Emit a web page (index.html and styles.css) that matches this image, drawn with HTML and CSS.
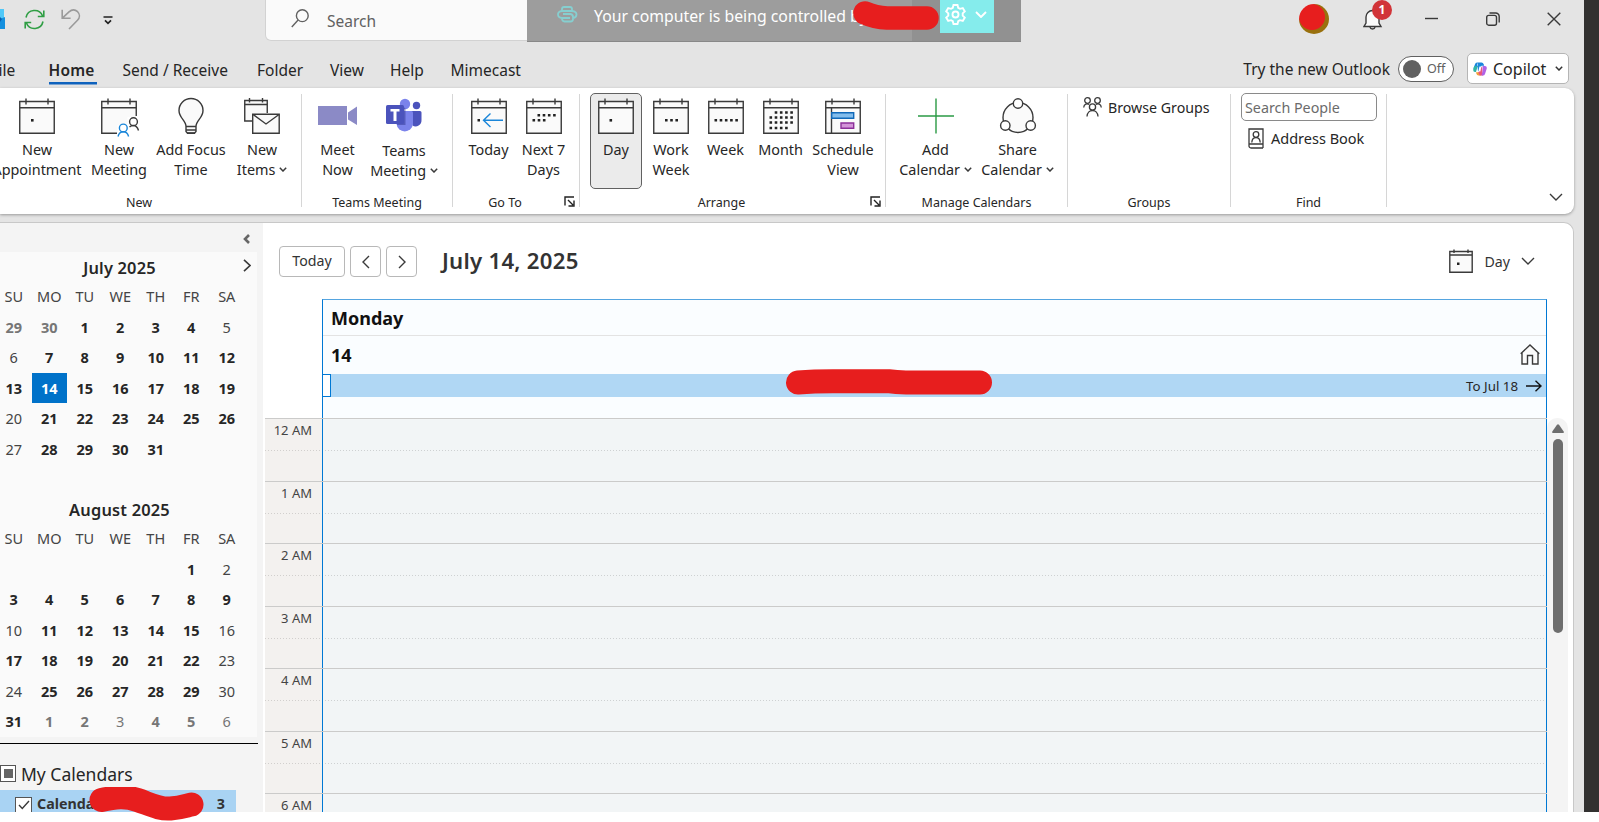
FILE: index.html
```html
<!DOCTYPE html>
<html lang="en">
   <head>
      <meta charset="utf-8">
      <title>Calendar - Outlook</title>
      <link rel="stylesheet" href="styles.css">
   </head>
   <body>
      <svg class="defs" width="0" height="0">
         <symbol id="cal" viewBox="0 0 36 36">
            <path class="paper" d="M.75 3.5h34.5v31.7H.75z"/>
            <path d="M.75 9.7h34.5M7 .5v6M29 .5v6"/>
         </symbol>
         <symbol id="chev" viewBox="0 0 8 5">
            <path d="M.8.8L4 4 7.2.8"/>
         </symbol>
         <symbol id="launch" viewBox="0 0 11 11">
            <path d="M1 9.5V1h9M4 4l5 5M10 4.5V10H4.5"/>
         </symbol>
      </svg>

      <div class="app">
         <div class="window">
            <header class="titlebar">
               <div class="quick">
                  <svg class="logo" width="6" height="21" viewBox="0 0 6 21"><path fill="#50c8f8" d="M0 0h4v10H0z"/><path fill="#1490df" d="M0 10l5-2v12H0z"/><path fill="#0a5fb0" d="M0 8l2 2-2 3z"/></svg>
                  <svg class="sync" width="21" height="21" viewBox="0 0 21 21"><path d="M2 8.5A8.7 8.7 0 0 1 18.6 7M19.8 1.5v6h-6M19 12.5A8.7 8.7 0 0 1 2.4 14M1.2 19.5v-6h6"/></svg>
                  <svg class="undo" width="20" height="21" viewBox="0 0 20 21"><path d="M1.2.8v8.4h8.4M1.6 8.8L8 2.9c2.9-2.6 6.300-2.300 8.600-.2 2.500 2.500 2.300 6-.1 8.500L8 20"/></svg>
                  <svg class="qat" width="10" height="9" viewBox="0 0 10 9"><path d="M.5 1h9M2 4.300l3 3 3-3"/></svg>
               </div>
               <div class="search">
                  <svg width="18" height="19" viewBox="0 0 18 19"><circle cx="11.300" cy="6.700" r="5.900"/><path d="M7.100 11L.8 18"/></svg>
                  <span>Search</span>
               </div>
               <div class="window-buttons">
                  <div class="avatar"></div>
                  <div class="bell">
                     <svg width="20" height="22" viewBox="0 0 20 22"><path class="paper" d="M1 17.500h17l-2-3.500V8a6.500 6.500 0 0 0-13 0v6z"/><path d="M7 18c.4 2.600 4.600 2.600 5 0"/></svg>
                     <span class="badge">1</span>
                  </div>
                  <svg class="min" width="13" height="14" viewBox="0 0 13 14"><path d="M0 6.500h13"/></svg>
                  <svg class="restore" width="14" height="14" viewBox="0 0 14 14"><rect x=".7" y="3.400" width="9.800" height="9.800" rx="2"/><path d="M3.500 1h6.200a3.500 3.500 0 0 1 3.500 3.500v6"/></svg>
                  <svg class="close" width="14" height="14" viewBox="0 0 14 14"><path d="M.7.700l12.600 12.600M13.300.700L.7 13.300"/></svg>
               </div>
            </header>

            <nav class="tabs">
               <span class="tab file">File</span>
               <span class="tab home">Home</span>
               <span class="tab send">Send / Receive</span>
               <span class="tab folder">Folder</span>
               <span class="tab view">View</span>
               <span class="tab help">Help</span>
               <span class="tab mime">Mimecast</span>
               <div class="tabs-right">
                  <span class="try">Try the new Outlook</span>
                  <span class="toggle"><i></i>Off</span>
                  <span class="copilot">
                     <svg width="14" height="14" viewBox="0 0 14 14"><path fill="#1b86dc" d="M4 .5h4.500q1.700 0 2.200 1.700l.5 1.600H8.500L6.600 9H5z M4 .5Q2.600.500 2.100 2L.4 6.500 3 8l2-5z"/><path fill="#31b5a5" d="M1.200 4.200L4.600 4 3 10H2Q-.2 10 .3 7z"/><path fill="#f2a03a" d="M3 10.200h3.500L8 13.500H5.500q-1.700 0-2.100-1.700z"/><path fill="#e8557f" d="M5.500 10.200L7.400 5H9l1 8.500H6.500z"/><path fill="#b062e6" d="M9.500 4H12q2.200 0 1.700 2.800L12 12q-.6 1.500-2 1.500H8.500L9.600 9.500z"/><path fill="#fff" d="M6.500 4.500h2L7.300 9.500h-2z"/></svg>
                     <span>Copilot</span>
                     <svg class="chev dark" width="8" height="5"><use href="#chev"/></svg>
                  </span>
               </div>
            </nav>

            <section class="ribbon">
               <div class="group g-new">
                  <div class="buttons">
                     <div class="btn b-appt">
                        <svg width="36" height="36"><use href="#cal"/><path class="dots" d="M12 21h2.600v2.600H12z"/></svg>
                        <span>New<br>Appointment</span>
                     </div>
                     <div class="btn b-meet">
                        <svg width="36" height="36" viewBox="0 0 36 36"><path class="paper" d="M16 35.200H.75V3.500h34.500V18"/><path d="M.75 9.700h34.500M7 .5v6M29 .5v6"/><path class="knock" d="M16.500 39V27h10v-8h13v20z"/><circle cx="32.500" cy="23.700" r="3.900"/><path d="M28.500 29q1.500-1.500 4-1.500 3.500 0 5 5"/><g class="blue"><circle cx="22.300" cy="30" r="3.900"/><path d="M17 38.500q1.300-4.700 5.300-4.700t5.300 4.700"/></g></svg>
                        <span>New<br>Meeting</span>
                     </div>
                     <div class="btn b-focus">
                        <svg width="26" height="36" viewBox="0 0 26 36"><path class="paper" d="M8 28.500c0-6-7-8.500-7-16a12 12 0 0 1 24 0c0 7.500-7 10-7 16v5l-1.500 1.700h-7L8 33.500z"/><path d="M8 28.500h10M8 32h10M9 35h8"/></svg>
                        <span>Add Focus<br>Time</span>
                     </div>
                     <div class="btn b-items">
                        <svg width="36" height="36" viewBox="0 0 36 36"><path class="paper" d="M8 23H.75V2.500h22.500V15"/><path d="M.75 6.500h22.500M5.500 0v4.500M18.500 0v4.500"/><path class="paper" d="M8.700 16.200h26.500v19H8.700z"/><path d="M9 16.500l13 9.500 13-9.500"/></svg>
                        <span>New<br>Items <svg class="chev" width="8" height="5"><use href="#chev"/></svg></span>
                     </div>
                  </div>
                  <div class="name">New</div>
               </div>
               <div class="group g-teams">
                  <div class="buttons">
                     <div class="btn b-now">
                        <svg width="39" height="36" viewBox="0 0 39 36"><path class="fill-cam" d="M0 8h29v19H0zM30 14.500L39 8.500v18.500L30 21.500z"/></svg>
                        <span>Meet<br>Now</span>
                     </div>
                     <div class="btn b-teams">
                        <svg width="36" height="36" viewBox="0 0 36 36"><circle class="t1" cx="19" cy="6" r="5.200"/><circle class="t2" cx="30.500" cy="7.500" r="3.700"/><path class="t2" d="M25 13h9q1.500 0 1.500 1.500V22a6 6 0 0 1-9 5.500z"/><path class="t1" d="M11 13h14.500q1.500 0 1.500 1.500V26a8.300 8.300 0 0 1-16.500 0z"/><path class="shade" d="M11 9.500h7q1.500 0 1.500 1.500v16h-8.500z"/><rect class="t2" x="0" y="7" width="18" height="19" rx="1.600"/><path class="tee" d="M4.500 11h9v2.500h-3v9.500h-3v-9.500h-3z"/></svg>
                        <span>Teams<br>Meeting <svg class="chev" width="8" height="5"><use href="#chev"/></svg></span>
                     </div>
                  </div>
                  <div class="name">Teams Meeting</div>
               </div>
               <div class="group g-goto">
                  <div class="buttons">
                     <div class="btn b-today">
                        <svg width="36" height="36"><use href="#cal"/><path class="dots" d="M6.500 21h2.500v2.500H6.500z"/><path class="blue" d="M32 22.300H13M19.500 15.500L12.500 22.300l7 6.800"/></svg>
                        <span>Today</span>
                     </div>
                     <div class="btn b-next">
                        <svg width="36" height="36"><use href="#cal"/><path class="dotline" d="M11.500 17.300h18.500M6.500 22.300h13.500"/></svg>
                        <span>Next 7<br>Days</span>
                     </div>
                  </div>
                  <div class="name">Go To</div>
                  <svg class="launch" width="11" height="11"><use href="#launch"/></svg>
               </div>
               <div class="group g-arrange">
                  <div class="buttons">
                     <div class="btn b-day active">
                        <svg width="36" height="36"><use href="#cal"/><path class="dots" d="M11.500 21h2.600v2.600h-2.600z"/></svg>
                        <span>Day</span>
                     </div>
                     <div class="btn b-work">
                        <svg width="36" height="36"><use href="#cal"/><path class="dotline" d="M12 22.300h13.500"/></svg>
                        <span>Work<br>Week</span>
                     </div>
                     <div class="btn b-week">
                        <svg width="36" height="36"><use href="#cal"/><path class="dotline" d="M6.500 22.300h24"/></svg>
                        <span>Week</span>
                     </div>
                     <div class="btn b-month">
                        <svg width="36" height="36"><use href="#cal"/><path class="dotline" d="M11.700 14.500h18.500M6.500 19.500h24M6.500 24.500h24M6.500 30h18.500"/></svg>
                        <span>Month</span>
                     </div>
                     <div class="btn b-sched">
                        <svg width="36" height="36"><use href="#cal"/><path d="M6.500 10v25"/><path class="bar1" d="M6.700 14.700h22v5.500h-22z"/><path class="bar2" d="M16 25h12.700v5.200H16z"/></svg>
                        <span>Schedule<br>View</span>
                     </div>
                  </div>
                  <div class="name">Arrange</div>
                  <svg class="launch" width="11" height="11"><use href="#launch"/></svg>
               </div>
               <div class="group g-manage">
                  <div class="buttons">
                     <div class="btn b-add">
                        <svg width="36" height="36"><path class="green" d="M0 18h36M18 .500v35"/></svg>
                        <span>Add<br>Calendar <svg class="chev" width="8" height="5"><use href="#chev"/></svg></span>
                     </div>
                     <div class="btn b-share">
                        <svg width="36" height="36"><circle class="paper" cx="18" cy="19.500" r="15"/><circle class="node" cx="18" cy="5.500" r="4.700"/><circle class="node" cx="5.300" cy="27.500" r="4.700"/><circle class="node" cx="30.700" cy="27.500" r="4.700"/></svg>
                        <span>Share<br>Calendar <svg class="chev" width="8" height="5"><use href="#chev"/></svg></span>
                     </div>
                  </div>
                  <div class="name">Manage Calendars</div>
               </div>
               <div class="group g-groups">
                  <div class="line">
                     <svg width="19" height="20" viewBox="0 0 19 20"><circle cx="4.500" cy="3.500" r="2.800"/><circle cx="14.500" cy="3.500" r="2.800"/><circle cx="9.500" cy="10" r="3.100"/><path d="M.7 10.500C1 7 4 6 6 7.500M18.300 10.500C18 7 15 6 13 7.500M4 19.500c.5-8 10.500-8 11 0"/></svg>
                     <span>Browse Groups</span>
                  </div>
                  <div class="name">Groups</div>
               </div>
               <div class="group g-find">
                  <div class="people">Search People</div>
                  <div class="line book">
                     <svg width="16" height="21" viewBox="0 0 16 21"><path d="M15 20H3a2 2 0 0 1-2-2V1h14v19M1.500 16H15"/><circle cx="8" cy="6.500" r="2.800"/><path d="M3.800 14.500c.4-6.500 8-6.500 8.400 0"/></svg>
                     <span>Address Book</span>
                  </div>
                  <div class="name">Find</div>
               </div>
               <svg class="collapse" width="14" height="8" viewBox="0 0 14 8"><path d="M1 1l6 6 6-6"/></svg>
            </section>

            <main class="content">
               <aside class="side">
                  <div class="side-top"><svg width="7" height="10" viewBox="0 0 7 10"><path d="M6 1L2 5l4 4"/></svg></div>
                  <div class="months">
                     <div class="month">
                        <div class="month-title">July 2025 <svg class="next" width="8" height="13" viewBox="0 0 8 13"><path d="M1 .800l6 5.700-6 5.700"/></svg></div>
                        <div class="days head"><i>SU</i><i>MO</i><i>TU</i><i>WE</i><i>TH</i><i>FR</i><i>SA</i></div>
                        <div class="days">
                           <b class="dim">29</b><b class="dim">30</b><b>1</b><b>2</b><b>3</b><b>4</b><i>5</i>
                           <i>6</i><b>7</b><b>8</b><b>9</b><b>10</b><b>11</b><b>12</b>
                           <b>13</b><b class="sel">14</b><b>15</b><b>16</b><b>17</b><b>18</b><b>19</b>
                           <i>20</i><b>21</b><b>22</b><b>23</b><b>24</b><b>25</b><b>26</b>
                           <i>27</i><b>28</b><b>29</b><b>30</b><b>31</b>
                        </div>
                     </div>
                     <div class="month">
                        <div class="month-title">August 2025</div>
                        <div class="days head"><i>SU</i><i>MO</i><i>TU</i><i>WE</i><i>TH</i><i>FR</i><i>SA</i></div>
                        <div class="days">
                           <b class="first-fri">1</b><i>2</i>
                           <b>3</b><b>4</b><b>5</b><b>6</b><b>7</b><b>8</b><b>9</b>
                           <i>10</i><b>11</b><b>12</b><b>13</b><b>14</b><b>15</b><i>16</i>
                           <b>17</b><b>18</b><b>19</b><b>20</b><b>21</b><b>22</b><i>23</i>
                           <i>24</i><b>25</b><b>26</b><b>27</b><b>28</b><b>29</b><i>30</i>
                           <b>31</b><b class="dim">1</b><b class="dim">2</b><i class="dim">3</i><b class="dim">4</b><b class="dim">5</b><i class="dim">6</i>
                        </div>
                     </div>
                  </div>
                  <div class="my-calendars">
                     <span class="box mixed"></span>
                     <span>My Calendars</span>
                  </div>
                  <div class="calendar-row">
                     <span class="box"><svg width="12" height="10" viewBox="0 0 12 10"><path d="M1 5l3.300 3.500L11 1"/></svg></span>
                     <span class="cal-name">Calenda</span>
                     <span class="count">3</span>
                  </div>
               </aside>

               <section class="day-view">
                  <div class="toolbar">
                     <span class="tool today">Today</span>
                     <span class="tool prev"><svg width="8" height="14" viewBox="0 0 8 14"><path d="M7 1L1 7l6 6"/></svg></span>
                     <span class="tool nxt"><svg width="8" height="14" viewBox="0 0 8 14"><path d="M1 1l6 6-6 6"/></svg></span>
                     <h1>July 14, 2025</h1>
                     <div class="picker">
                        <svg width="24" height="24" viewBox="0 0 24 24"><path class="paper" d="M.8 2.500h22.400v20.700H.8z"/><path d="M1 6h22M5 .500v3.500M19 .500v3.500"/><path class="dots" d="M8 13.500h2.500v2.500H8z"/></svg>
                        <span>Day</span>
                        <svg width="14" height="8" viewBox="0 0 14 8"><path d="M1 1l6 6 6-6"/></svg>
                     </div>
                  </div>
                  <div class="day-head">
                     <div class="weekday">Monday</div>
                     <div class="date">14
                        <svg width="20" height="21" viewBox="0 0 20 21"><path class="paper" d="M.700 9.700L10 1l9.300 8.700M2 9v11h5.500v-8.500h5V20H18V9"/></svg>
                     </div>
                     <div class="event">
                        <span class="busy"></span>
                        <span>To Jul 18</span>
                        <svg width="16" height="12" viewBox="0 0 16 12"><path d="M0 6h15M9.500.700L15 6l-5.500 5.300"/></svg>
                     </div>
                  </div>
                  <div class="scroll">
                     <div class="hours">
                        <div class="hour"><span>12 AM</span><div></div></div>
                        <div class="hour"><span>1 AM</span><div></div></div>
                        <div class="hour"><span>2 AM</span><div></div></div>
                        <div class="hour"><span>3 AM</span><div></div></div>
                        <div class="hour"><span>4 AM</span><div></div></div>
                        <div class="hour"><span>5 AM</span><div></div></div>
                        <div class="hour"><span>6 AM</span><div></div></div>
                     </div>
                     <div class="scrollbar">
                        <svg width="12" height="9" viewBox="0 0 12 9"><path d="M5 .800q1-1.300 2 0l4.700 6.700q.5 1.500-1 1.500H1.300Q-.2 9 .3 7.500z"/></svg>
                        <div class="thumb"></div>
                     </div>
                  </div>
               </section>
            </main>
         </div>

         <!-- remote control bar floats over the title bar -->
         <div class="remote">
            <svg class="remote-icon" width="21" height="17" viewBox="0 0 21 17"><path d="M15 5V3q0-2-2-2H7Q5 1 5 3v2h10q4.500.5 4.500 3.500T16 12M5 5Q1 5.500 1 8.500T5 12h1M6 8h7.500q2.500.5 2.500 3v2q0 2.500-2.500 2.500h-6Q5 15.500 5 12h8"/></svg>
            <span>Your computer is being controlled by</span>
            <div class="remote-menu">
               <svg width="21" height="21" viewBox="0 0 21 21"><path d="M8.500 1h4l.7 2.800 1.800 1 2.800-.8 2 3.400-2.100 2v2.200l2.100 2-2 3.400-2.800-.8-1.800 1-.7 2.800h-4l-.7-2.800-1.800-1-2.800.8-2-3.400 2.100-2V9.400l-2.100-2 2-3.400 2.800.8 1.800-1z"/><circle cx="10.500" cy="10.500" r="3"/></svg>
               <svg width="12" height="7" viewBox="0 0 12 7"><path d="M1 1l5 5 5-5"/></svg>
            </div>
         </div>
      </div>

      <svg class="ink ink-name" width="88" height="29" viewBox="0 0 88 29"><path d="M13 12q10 4.500 22 5h40" stroke-width="23.500"/></svg>
      <svg class="ink ink-event" width="208" height="28" viewBox="0 0 208 28"><path d="M13 13.500q18-1.500 40-1.300h50q8 1.300 18 1.300h74" stroke-width="24"/></svg>
      <svg class="ink ink-cal" width="117" height="36" viewBox="0 0 117 36"><path d="M13.500 13c14-3 24-4 36 0s22 9.500 33 8.500 16-3 21-4" stroke-width="24"/></svg>
   </body>
</html>
```
FILE: styles.css
```css
body {
   margin: 0;
   width: 1599px;
   height: 822px;
   position: relative;
   overflow: hidden;
   background: #fff;
   color: #262626;
   font-family: "Noto Sans", "Open Sans", sans-serif;
}

svg {
   fill: none;
   stroke: #3a3a3a;
   stroke-width: 1.4;
   flex: none;
}

i {
   font-style: normal;
}

.defs {
   position: absolute;
}

.paper {
   fill: #fafafa;
}

.app {
   height: 812px;
   background: #323130;
   position: relative;
   overflow: hidden;
}

.window {
   width: 1584px;
   height: 812px;
   background: #e4e4e4;
   display: flex;
   flex-direction: column;
}

/* title bar */
.titlebar {
   height: 41px;
   display: flex;
   flex: none;
}

.quick {
   width: 265px;
   display: flex;
   align-items: flex-start;
   padding-top: 9px;
   flex: none;
}

.logo {
   stroke: none;
}

.sync {
   margin-left: 18px;
   stroke: #2f9e44;
   stroke-width: 1.6;
}

.undo {
   margin-left: 16px;
   stroke: #9a9a9a;
   stroke-width: 1.6;
}

.qat {
   margin: 7px 0 0 22px;
   stroke: #222;
   stroke-width: 1.7;
}

.search {
   width: 646px;
   height: 41px;
   box-sizing: border-box;
   border: 1px solid #d2d2d2;
   border-top: 0;
   border-radius: 0 0 6px 6px;
   background: #fafafa;
   display: flex;
   align-items: center;
   padding: 1px 0 0 25px;
   gap: 18px;
   font-size: 15.5px;
   color: #616161;
}

.search svg {
   margin-top: -4px;
   stroke: #616161;
}

.window-buttons {
   display: flex;
   margin-left: auto;
   padding: 12px 23px 0 0;
}

.avatar {
   width: 30px;
   height: 30px;
   margin: -8px -1px 0 0;
   border-radius: 50%;
   background: radial-gradient(circle at 13px 13px, #e71e1e 12.500px, #99700d 13.500px);
}

.bell {
   position: relative;
   margin: -3px 0 0 35px;
   width: 20px;
}

.badge {
   position: absolute;
   left: 9px;
   top: -9px;
   width: 20px;
   height: 20px;
   border-radius: 50%;
   background: #d13438;
   color: #fff;
   font-size: 12px;
   font-weight: bold;
   line-height: 20px;
   text-align: center;
}

.min {
   margin-left: 42px;
}

.restore {
   margin-left: 48px;
}

.close {
   margin-left: 47px;
}

/* tabs */
.tabs {
   height: 47px;
   flex: none;
   display: flex;
   align-items: center;
   font-size: 15.5px;
   white-space: nowrap;
}

.tab {
   line-height: 24px;
   margin-top: 11px;
   flex: none;
}

.file {
   width: 58px;
   margin-left: -9.500px;
}

.home {
   width: 48px;
   font-weight: 600;
   letter-spacing: .2px;
   box-shadow: 0 2.500px 0 #0f62bd;
}

.send {
   margin-left: 26px;
   width: 134.500px;
}

.folder {
   width: 73px;
}

.view {
   width: 60px;
}

.help {
   width: 60.500px;
}

.tabs-right {
   display: flex;
   align-items: center;
   margin: 8px 15px 0 auto;
}

.toggle {
   box-sizing: border-box;
   width: 56px;
   height: 26px;
   margin: 0 13px 0 8px;
   border: 1px solid #616161;
   border-radius: 13px;
   background: #fff;
   color: #616161;
   font-size: 12.5px;
   display: flex;
   align-items: center;
   gap: 6px;
   padding-left: 4px;
}

.toggle i {
   width: 18px;
   height: 18px;
   border-radius: 50%;
   background: #616161;
}

.copilot {
   box-sizing: border-box;
   width: 102px;
   height: 31px;
   border: 1px solid #b5b5b5;
   border-radius: 5px;
   background: #fff;
   display: flex;
   align-items: center;
   padding-left: 5px;
   gap: 6px;
   font-size: 16px;
}

.copilot svg {
   stroke: none;
}

.copilot .chev {
   stroke: #333;
   margin-left: 3px;
}

/* ribbon */
.ribbon {
   height: 126px;
   width: 1574px;
   flex: none;
   background: #fff;
   border-radius: 0 9px 9px 0;
   box-shadow: 0 1px 3px #9a9a9a;
   display: flex;
   position: relative;
   white-space: nowrap;
}

.group {
   box-sizing: border-box;
   margin: 6px 0 7px;
   height: 113px;
   border-right: 1px solid #d6d6d6;
   position: relative;
   display: flex;
   flex-direction: column;
}

.buttons {
   display: flex;
   height: 95px;
   margin-top: -1px;
}

.btn {
   display: flex;
   flex-direction: column;
   align-items: center;
   box-sizing: border-box;
   padding-top: 5px;
   font-size: 14.4px;
   line-height: 20.400px;
   text-align: center;
}

.btn > span {
   margin-top: 5.500px;
}

.btn > svg {
   height: 36px;
   overflow: visible;
}

.chev {
   stroke-width: 1.5;
   vertical-align: 3px;
}

.name {
   margin-top: auto;
   height: 20px;
   line-height: 20px;
   margin-bottom: -5.500px;
   font-size: 12.500px;
   text-align: center;
}

.launch {
   position: absolute;
   right: 4px;
   bottom: 0;
   stroke: #222;
}

.g-new { width: 302px; }
.g-teams { width: 151px; }
.g-goto { width: 127px; }
.g-arrange { width: 306px; }
.g-manage { width: 182px; }
.g-groups { width: 163px; }
.g-find { width: 156px; }

.g-new .name { padding-right: 23px; }
.g-goto .name { padding-right: 22px; }
.g-arrange .name { padding-right: 22px; }

.b-appt { width: 90px; margin-left: -8px; }
.b-meet { width: 74px; }
.b-focus { width: 70px; }
.b-items { width: 72px; }
.b-now { width: 71px; }
.b-teams { width: 62px; }
.b-today { width: 53px; margin-left: 9px; }
.b-next { width: 57px; }
.b-day { width: 52px; margin-left: 10px; }
.b-work { width: 54px; margin-left: 2px; }
.b-week { width: 55px; }
.b-month { width: 55px; }
.b-sched { width: 70px; }
.b-add { width: 83px; margin-left: 8px; }
.b-share { width: 81px; }

.b-teams > span {
   margin-top: 7px;
}

.active {
   height: 96px;
   padding-top: 4px;
   border: 1px solid #616161;
   border-radius: 5px;
   background: #ebebeb;
}

.dots {
   fill: #222;
   stroke: none;
}

.dotline {
   stroke: #222;
   stroke-width: 2.600;
   stroke-dasharray: 2.600 2.600;
}

.blue { stroke: #1a86d9; }
.green { stroke: #2b9a45; }
.knock { fill: #fff; stroke: none; }
.node { fill: #fff; }
.fill-cam { fill: #8b8ac6; stroke: none; }
.t1 { fill: #7b83eb; stroke: none; }
.t2 { fill: #4b53bc; stroke: none; }
.shade { fill: #2f3590; stroke: none; opacity: .5; }
.tee { fill: #fff; stroke: none; }
.bar1 { fill: #83bdec; stroke: #1068b8; }
.bar2 { fill: #d394d8; stroke: #8c2f9a; }

.line {
   display: flex;
   align-items: center;
   gap: 6px;
   height: 22px;
   font-size: 14.2px;
   margin: 2px 0 0 15px;
}

.line svg {
   stroke-width: 1.3;
}

.people {
   box-sizing: border-box;
   width: 136px;
   height: 28px;
   margin: -1px 0 0 10px;
   border: 1px solid #8a8a8a;
   border-radius: 5px;
   padding-left: 3px;
   line-height: 27px;
   font-size: 14.3px;
   color: #6b6b6b;
}

.book {
   margin: 6px 0 0 17px;
   gap: 7px;
   font-size: 14.5px;
}

.collapse {
   position: absolute;
   right: 11px;
   bottom: 13px;
}

/* content */
.content {
   display: flex;
   width: 1574px;
   box-sizing: border-box;
   margin-top: 8px;
   flex: 1;
   min-height: 0;
   border: 1px solid #c8c8c8;
   border-width: 1px 1px 0 0;
   border-radius: 0 10px 0 0;
   background: #fff;
}

.side {
   width: 263px;
   flex: none;
   background: #f4f4f4;
}

.side-top {
   height: 29px;
   display: flex;
   justify-content: flex-end;
   align-items: flex-start;
   padding: 11px 13px 0 0;
   box-sizing: border-box;
}

.side-top svg {
   stroke: #666;
   stroke-width: 2.600;
}

.months {
   width: 257px;
   height: 485px;
   background: #fafafa;
}

.month {
   height: 242px;
}

.month-title {
   height: 30px;
   line-height: 31px;
   width: 239px;
   text-align: center;
   font-size: 16.400px;
   font-weight: 600;
   letter-spacing: .2px;
   position: relative;
}

.next {
   position: absolute;
   right: -12px;
   top: 7px;
   stroke-width: 1.600;
}

.days {
   display: grid;
   grid-template-columns: repeat(7, 35.500px);
   grid-auto-rows: 30.400px;
   margin-left: -4px;
   line-height: 30.400px;
   text-align: center;
   font-size: 14.500px;
}

.head {
   grid-auto-rows: 29px;
   line-height: 29px;
   padding-bottom: 1px;
}

.days b {
   font-weight: 700;
}

.days i {
   color: #444;
}

.days .dim {
   color: #767676;
}

.days .sel {
   background: #0072c9;
   color: #fff;
}

.first-fri {
   grid-column: 6;
}

.my-calendars {
   width: 258px;
   margin-top: 6px;
   height: 47px;
   box-sizing: border-box;
   border-top: 1px solid #000;
   padding-top: 13px;
   display: flex;
   align-items: center;
   gap: 5px;
   font-size: 17.500px;
}

.box {
   width: 17px;
   height: 17px;
   box-sizing: border-box;
   border: 1px solid #555;
   background: #fff;
   display: flex;
   align-items: center;
   justify-content: center;
}

.mixed {
   width: 16px;
   background: linear-gradient(#666, #666) center / 9px 9px no-repeat #fff;
}

.calendar-row {
   width: 236px;
   height: 29px;
   background: #a9d3f3;
   display: flex;
   align-items: center;
   box-sizing: border-box;
   padding: 0 11px 0 15px;
   font-size: 14.300px;
   font-weight: 700;
   color: #333;
}

.calendar-row .box {
   margin-top: 1px;
}

.cal-name {
   margin: -2px 0 0 5px;
}

.count {
   margin: -2px 0 0 auto;
}

/* day view */
.day-view {
   flex: 1;
   padding-left: 2px;
   display: flex;
   flex-direction: column;
}

.toolbar {
   height: 76px;
   box-sizing: border-box;
   padding: 23px 38px 22px 14px;
   display: flex;
   align-items: center;
   flex: none;
   font-size: 14.200px;
   color: #333;
}

.tool {
   box-sizing: border-box;
   width: 31px;
   height: 31px;
   border: 1px solid #b8b8b8;
   border-radius: 4px;
   display: flex;
   align-items: center;
   justify-content: center;
   margin-right: 5px;
}

.today {
   width: 66px;
   padding-bottom: 2px;
}

.toolbar h1 {
   margin: -2px 0 0 20px;
   font-size: 22.200px;
   font-weight: 600;
   letter-spacing: .25px;
}

.picker {
   display: flex;
   align-items: center;
   margin: -1px 0 0 auto;
   gap: 11px;
}

.day-head {
   width: 1225px;
   height: 119px;
   box-sizing: border-box;
   margin-left: 57px;
   flex: none;
   border: 1px solid #0078d4;
   border-top-color: #55a5e0;
   border-bottom: 0;
   background: #fafdff;
   font-size: 18px;
   font-weight: 700;
   color: #111;
}

.weekday {
   height: 35px;
   line-height: 37px;
   padding-left: 8px;
   border-bottom: 1px solid #e3e3e3;
}

.date {
   height: 38px;
   padding: 0 6px 1px 8px;
   box-sizing: border-box;
   display: flex;
   align-items: center;
   justify-content: space-between;
}

.event {
   height: 23px;
   margin-left: -1px;
   background: #b0d7f4;
   display: flex;
   align-items: center;
   font-size: 13.300px;
   font-weight: 400;
   color: #262626;
   padding-right: 4px;
   gap: 8px;
}

.event svg {
   stroke: #111;
}

.busy {
   box-sizing: border-box;
   width: 9px;
   height: 23px;
   border: 1px solid #0078d4;
   background: #fff;
   margin-right: auto;
}

.scroll {
   flex: 1;
   min-height: 0;
   display: flex;
   overflow: hidden;
}

.hours {
   width: 1282px;
   flex: none;
}

.hour {
   height: 62.500px;
   box-sizing: border-box;
   border-top: 1px solid #cbcbca;
   display: flex;
   background: repeating-linear-gradient(90deg, #dadada 0 1px, transparent 1px 3px) 0 31px / 100% 1px no-repeat;
}

.hour span {
   width: 57px;
   box-sizing: border-box;
   padding: 1px 10px 0 0;
   text-align: right;
   font-size: 13px;
   line-height: 20px;
   color: #444;
   background: rgba(120, 100, 80, .09);
}

.hour div {
   flex: 1;
   box-shadow: inset 1px 0 #0078d4, inset -1px 0 #0078d4;
   background: rgba(0, 60, 80, .05);
}

.scrollbar {
   width: 21px;
   background: #f4f4f4;
   border-radius: 10px 10px 0 0;
   display: flex;
   flex-direction: column;
   align-items: center;
   padding-top: 6px;
}

.scrollbar svg {
   fill: #6e6e6e;
   stroke: none;
}

.thumb {
   width: 10px;
   height: 194px;
   margin-top: 6px;
   border-radius: 5px;
   background: #6e6e6e;
}

/* remote control bar */
.remote {
   position: absolute;
   left: 527px;
   top: 0;
   width: 494px;
   height: 42px;
   box-sizing: border-box;
   background: linear-gradient(90deg, #9d9d9d 385px, #919191 385px);
   border-bottom: 1px solid #888;
   padding-left: 30px;
   display: flex;
   align-items: flex-start;
   color: #fff;
   font-size: 15.800px;
   white-space: nowrap;
}

.remote > span {
   margin: 5px 0 0 16px;
   width: 290px;
}

.remote-icon {
   margin-top: 6px;
   stroke: #86cfd0;
   stroke-width: 1.800;
}

.remote-menu {
   width: 54px;
   height: 33px;
   margin-left: 56px;
   background: #85ecec;
   display: flex;
   align-items: center;
   padding-left: 5px;
   box-sizing: border-box;
   gap: 9px;
}

.remote-menu svg {
   stroke: #fff;
   stroke-width: 1.900;
   margin-top: -4px;
}

/* marker strokes hiding names */
.ink {
   position: absolute;
   stroke: #e71e1e;
   stroke-linecap: round;
   stroke-linejoin: round;
}

.ink-name {
   left: 852px;
   top: 1px;
}

.ink-event {
   left: 785px;
   top: 369px;
}

.ink-cal {
   left: 88px;
   top: 787px;
}
```
